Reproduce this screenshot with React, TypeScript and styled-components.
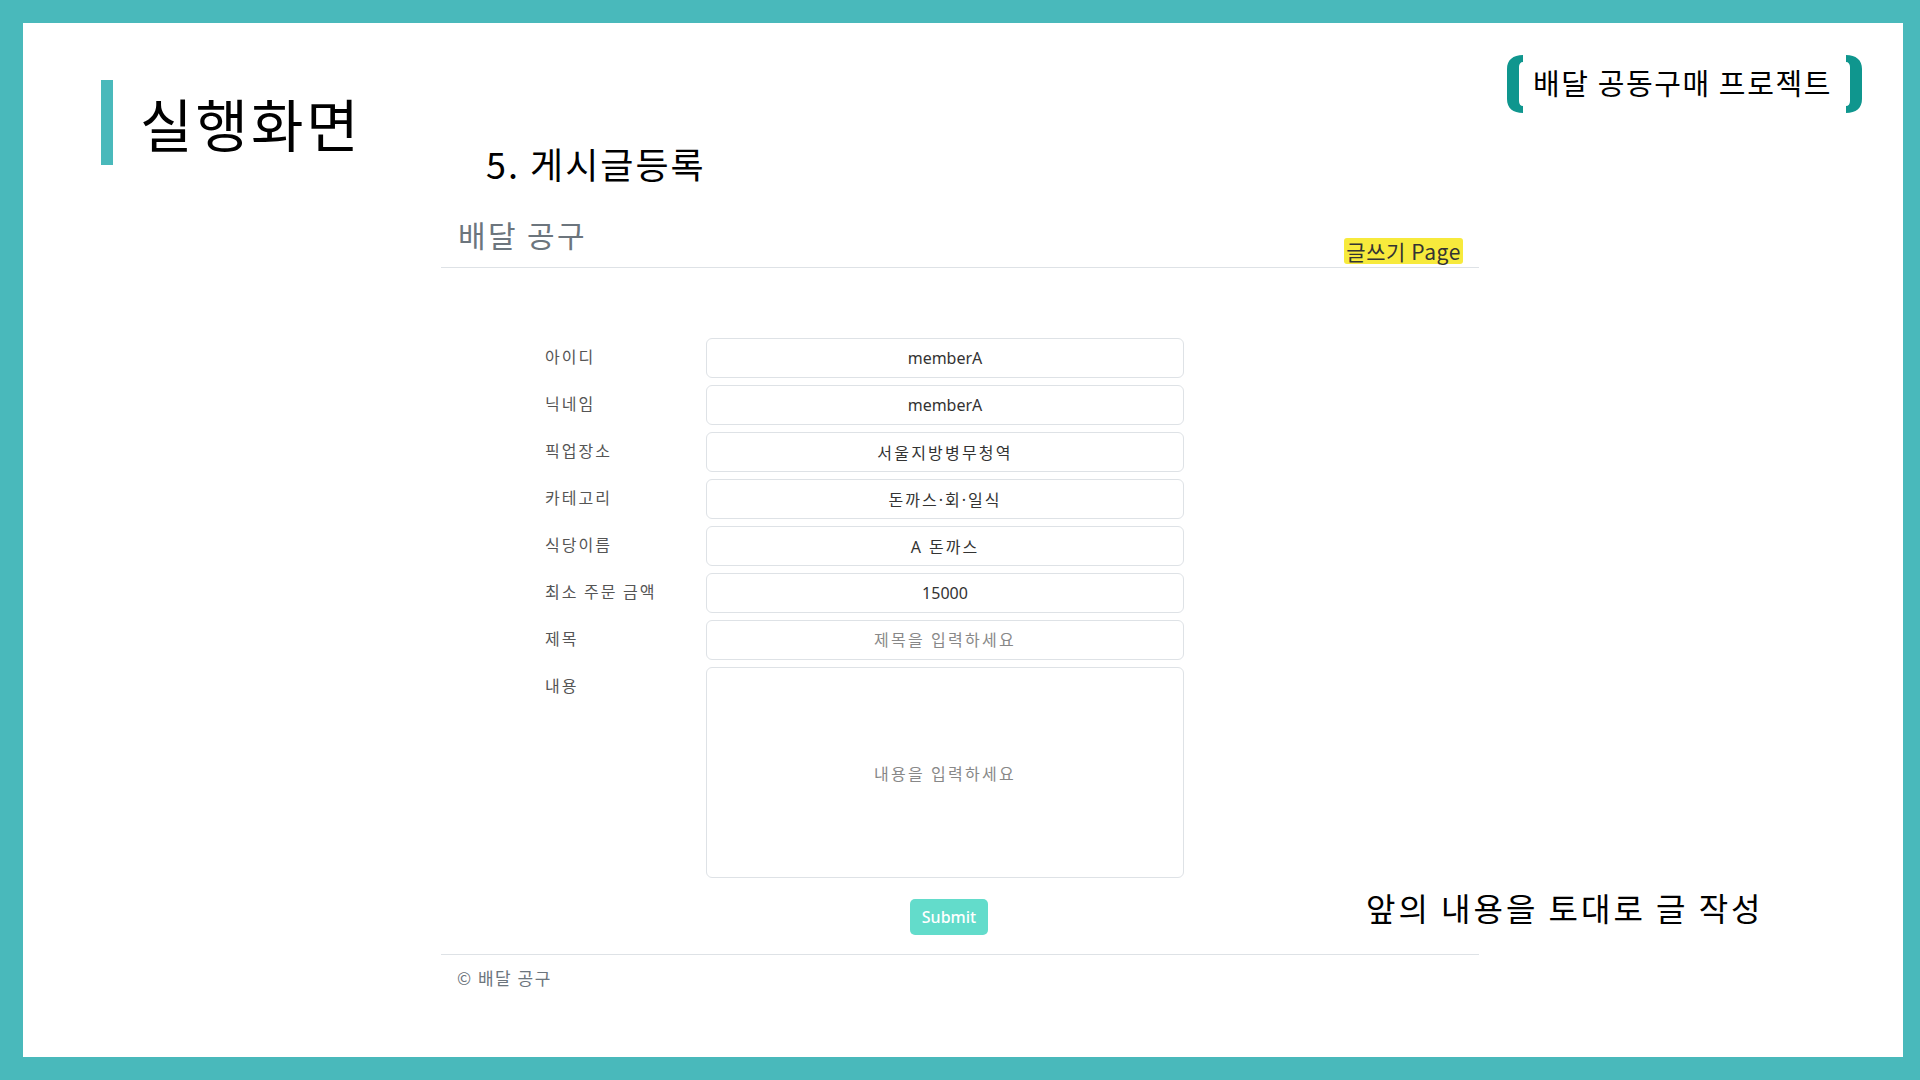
import React from 'react';
import styled, { createGlobalStyle } from 'styled-components';

const GlobalStyle = createGlobalStyle`
  html, body {
    margin: 0;
    padding: 0;
    background: #ffffff;
  }
  body {
    font-family: "Noto Sans CJK KR", "Noto Sans", sans-serif;
  }
  * {
    box-sizing: border-box;
  }
`;

const Frame = styled.div`
  width: 1920px;
  height: 1080px;
  border-style: solid;
  border-color: #49b9bb;
  border-width: 23px 17px 23px 23px;
  background: #ffffff;
`;

const Slide = styled.div`
  position: relative;
  width: 100%;
  height: 100%;
  display: flex;
  flex-direction: column;
`;

const Header = styled.div`
  display: grid;
  grid-template-columns: 385px 1fr auto;
  align-items: start;
  padding: 32px 41px 0 78px;
`;

const TitleBlock = styled.div`
  display: flex;
  align-items: center;
  margin-top: 25px;
  height: 85px;
`;

const TitleBar = styled.div`
  width: 12px;
  height: 85px;
  background: #49b9bb;
`;

const Title = styled.h1`
  margin: 0 0 0 27px;
  font-size: 57px;
  font-weight: 400;
  line-height: 1;
  color: #000;
  letter-spacing: 3px;
`;

const SubTitle = styled.h2`
  margin: 87px 0 0 0;
  font-size: 36px;
  font-weight: 400;
  line-height: 43px;
  color: #000;
  letter-spacing: 2px;
`;

const Badge = styled.div`
  width: 355px;
  height: 58px;
  display: flex;
  align-items: center;
  justify-content: space-between;
`;

const Bracket = styled.svg<{ $flip?: boolean }>`
  width: 16px;
  height: 58px;
  flex: none;
  transform: ${p => (p.$flip ? 'scaleX(-1)' : 'none')};
`;

const BadgeText = styled.span`
  flex: 1;
  padding: 0 0 4px 10px;
  font-size: 29px;
  line-height: 1;
  color: #000;
  white-space: nowrap;
  letter-spacing: 1.6px;
`;

const Web = styled.div`
  margin-left: 418px;
  width: 1038px;
  display: flex;
  flex-direction: column;
`;

const WebHeader = styled.div`
  display: flex;
  align-items: flex-end;
  justify-content: space-between;
  padding: 31px 16px 3px 17px;
  border-bottom: 1px solid #dee2e6;
`;

const Brand = styled.span`
  font-size: 30px;
  line-height: 36px;
  color: #6c757d;
  margin-bottom: 12px;
  letter-spacing: 2.4px;
`;

const Highlight = styled.span`
  background: #f7ea3c;
  font-size: 21px;
  line-height: 26px;
  padding: 0 2px;
  color: #333;
  border-radius: 3px;
  letter-spacing: 0.6px;
`;

const Form = styled.form`
  display: grid;
  grid-template-columns: 161px 478px;
  row-gap: 7px;
  padding: 70px 0 0 104px;
`;

const Label = styled.label`
  font-size: 16px;
  line-height: 24px;
  padding-top: 6px;
  color: #555;
  letter-spacing: 2px;
`;

const Field = styled.input<{ $spacing: number }>`
  width: 478px;
  height: 40px;
  border: 1px solid #dee2e6;
  border-radius: 6px;
  padding: 0 12px;
  text-align: center;
  font-family: "Noto Sans", "Noto Sans CJK KR", sans-serif;
  font-size: 16px;
  color: #333;
  letter-spacing: ${p => p.$spacing}px;
  background: #fff;
  outline: none;
  &::placeholder {
    color: #888;
    font-family: "Noto Sans CJK KR", sans-serif;
    letter-spacing: 2.3px;
  }
`;

const Area = styled.textarea`
  width: 478px;
  height: 211px;
  border: 1px solid #dee2e6;
  border-radius: 6px;
  padding: 93px 12px 0;
  text-align: center;
  font-family: "Noto Sans CJK KR", sans-serif;
  font-size: 16px;
  line-height: 24px;
  color: #212529;
  resize: none;
  outline: none;
  &::placeholder {
    color: #888;
    letter-spacing: 2.3px;
  }
`;

const ButtonRow = styled.div`
  grid-column: 2;
  padding: 14px 0 0 204px;
`;

const Submit = styled.button`
  width: 78px;
  height: 36px;
  border: none;
  border-radius: 5px;
  background: #63dccb;
  color: #ffffff;
  font-family: "Noto Sans", sans-serif;
  font-size: 16px;
  font-weight: 500;
  cursor: pointer;
`;

const Footer = styled.div`
  margin-top: 19px;
  border-top: 1px solid #dee2e6;
  padding: 11px 0 0 16px;
  font-size: 17px;
  line-height: 24px;
  color: #6c757d;
  letter-spacing: 1.5px;
`;

const Note = styled.div`
  position: absolute;
  left: 1343px;
  top: 864px;
  font-size: 32px;
  line-height: 40px;
  color: #000;
  white-space: nowrap;
  letter-spacing: 3px;
`;

const BracketShape: React.FC<{ flip?: boolean }> = ({ flip }) => (
  <Bracket $flip={flip} viewBox="0 0 16 58">
    <path
      d="M16 0 C6 0 0 5 0 14 V44 C0 53 6 58 16 58 V51 C13.5 51 12 49 12 46 V12 C12 9 13.5 7 16 7 Z"
      fill="#0f968e"
    />
  </Bracket>
);

const rows = [
  { label: '아이디', value: 'memberA', spacing: 0 },
  { label: '닉네임', value: 'memberA', spacing: 0 },
  { label: '픽업장소', value: '서울지방병무청역', spacing: 2.2 },
  { label: '카테고리', value: '돈까스·회·일식', spacing: 2 },
  { label: '식당이름', value: 'A 돈까스', spacing: 2 },
  { label: '최소 주문 금액', value: '15000', spacing: 0 },
];

const App: React.FC = () => {
  return (
    <>
      <GlobalStyle />
      <Frame>
        <Slide>
          <Header>
            <TitleBlock>
              <TitleBar />
              <Title>실행화면</Title>
            </TitleBlock>
            <SubTitle>5. 게시글등록</SubTitle>
            <Badge>
              <BracketShape />
              <BadgeText>배달 공동구매 프로젝트</BadgeText>
              <BracketShape flip />
            </Badge>
          </Header>

          <Web>
            <WebHeader>
              <Brand>배달 공구</Brand>
              <Highlight>글쓰기 Page</Highlight>
            </WebHeader>

            <Form onSubmit={e => e.preventDefault()}>
              {rows.map(r => (
                <React.Fragment key={r.label}>
                  <Label>{r.label}</Label>
                  <Field $spacing={r.spacing} defaultValue={r.value} />
                </React.Fragment>
              ))}
              <Label>제목</Label>
              <Field $spacing={0} placeholder="제목을 입력하세요" />
              <Label>내용</Label>
              <Area placeholder="내용을 입력하세요" />
              <ButtonRow>
                <Submit type="submit">Submit</Submit>
              </ButtonRow>
            </Form>

            <Footer>© 배달 공구</Footer>
          </Web>

          <Note>앞의 내용을 토대로 글 작성</Note>
        </Slide>
      </Frame>
    </>
  );
};

export default App;
